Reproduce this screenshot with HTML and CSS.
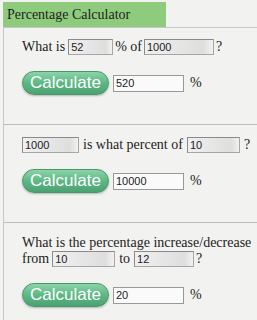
FILE: index.html
```html
<!DOCTYPE html>
<html lang="en">
<head>
    <meta charset="UTF-8">
    <meta name="viewport" content="width=device-width, initial-scale=1.0">
    <title>Percentage Calculator</title>
    <link rel="stylesheet" href="styles.css">
</head>
<body>
    <div class="tab">Percentage Calculator</div>
    <div class="panel">
        <!-- What is X % of Y -->
        <div class="calc-section first">
            <div class="row">
                <span>What is</span>
                <input type="text" class="field w45" value="52">
                <span>% of</span>
                <input type="text" class="field w70" value="1000">
                <span>?</span>
            </div>
            <div class="result-row">
                <button class="calc-btn">Calculate</button>
                <input type="text" class="result" value="520">
                <span class="pct">%</span>
            </div>
        </div>

        <!-- X is what percent of Y -->
        <div class="calc-section second">
            <div class="row">
                <input type="text" class="field w57" value="1000">
                <span class="mid">is what percent of</span>
                <input type="text" class="field w53" value="10">
                <span class="q">?</span>
            </div>
            <div class="result-row">
                <button class="calc-btn">Calculate</button>
                <input type="text" class="result" value="10000">
                <span class="pct">%</span>
            </div>
        </div>

        <!-- Increase / decrease -->
        <div class="calc-section third">
            <p class="question">What is the percentage increase/decrease</p>
            <div class="row">
                <span>from</span>
                <input type="text" class="field w63" value="10">
                <span class="mid">to</span>
                <input type="text" class="field w60" value="12">
                <span>?</span>
            </div>
            <div class="result-row">
                <button class="calc-btn">Calculate</button>
                <input type="text" class="result" value="20">
                <span class="pct">%</span>
            </div>
        </div>
    </div>
</body>
</html>
```

FILE: styles.css
```css
body {
    margin: 0;
    padding: 2px 0 0 3px;
    background: #f2f2f0;
    font-family: "Liberation Serif", "Times New Roman", serif;
    font-size: 14px;
    color: #222;
    overflow: hidden;
}

.tab {
    width: 159px;
    height: 25px;
    line-height: 25px;
    padding-left: 4px;
    background: #8fcb7d;
    color: #1e1e1e;
}

.panel {
    border-top: 1px solid #c8c8c8;
    border-left: 1px solid #c8c8c8;
}

.calc-section {
    padding: 11px 0 29px 18px;
    border-bottom: 1px solid #b8beb8;
}

.calc-section.second {
    padding-top: 12px;
}

.calc-section.third {
    padding-top: 12px;
    border-bottom: none;
}

.row {
    display: flex;
    align-items: center;
    height: 16px;
    gap: 2px;
    white-space: nowrap;
}

.row .mid {
    margin: 0 2px;
}

.row .q {
    margin-left: 2px;
}

.question {
    margin: 0;
    line-height: 16px;
    white-space: nowrap;
}

.field {
    box-sizing: border-box;
    height: 16px;
    padding: 0 2px;
    margin: 0;
    border: 1px solid #a6a6a6;
    border-top-color: #8a8a8a;
    border-left-color: #8a8a8a;
    background: linear-gradient(to right, #f0f0f0, #dedede 85%, #f2f2f2);
    font-family: "Liberation Sans", Arial, sans-serif;
    font-size: 11px;
    color: #222;
}

.w45 { width: 45px; margin-left: 1px; }
.w70 { width: 70px; }
.w57 { width: 57px; }
.w53 { width: 53px; }
.w63 { width: 63px; margin-left: 1px; }
.w60 { width: 60px; }

.result-row {
    display: flex;
    align-items: center;
    margin-top: 16px;
}

.calc-btn {
    box-sizing: border-box;
    width: 87px;
    height: 24px;
    padding: 0 0 1px;
    border: 1px solid #4a976b;
    border-radius: 12px;
    background: linear-gradient(#8cd3a8, #5db886 50%, #4ba271);
    box-shadow: 0 1px 2px rgba(0, 0, 0, 0.25);
    color: #fff;
    font-family: "Liberation Sans", Arial, sans-serif;
    font-size: 17px;
    line-height: 20px;
}

.result {
    box-sizing: border-box;
    width: 71px;
    height: 17px;
    margin-left: 4px;
    padding: 0 2px;
    border: 1px solid #999;
    background: #fafafa;
    font-family: "Liberation Sans", Arial, sans-serif;
    font-size: 11px;
    color: #222;
}

.pct {
    margin-left: 6px;
}
```
